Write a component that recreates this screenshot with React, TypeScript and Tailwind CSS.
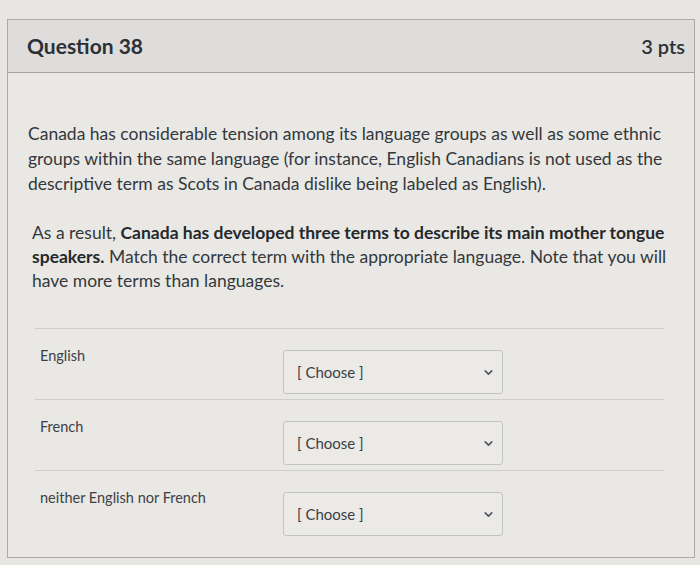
import React from 'react';

const rows = ['English', 'French', 'neither English nor French'];

const Chevron: React.FC = () => (
  <svg width="11" height="11" viewBox="0 0 10 10" fill="none" stroke="#4a5560" strokeWidth="1.4" strokeLinecap="round" strokeLinejoin="round">
    <path d="M2 3.5 L5 6.5 L8 3.5" />
  </svg>
);

const App: React.FC = () => {
  return (
    <div className="w-[700px] h-[565px] overflow-hidden bg-[#e7e6e3] pt-[19px] pl-[7px] font-['Lato','Liberation_Sans',sans-serif] text-[#33383c]">
      <div className="w-[688px] h-[539px] border border-[#a9a9a7] bg-[#e9e8e5] flex flex-col">
        <header className="h-[53px] shrink-0 bg-[#dedddb] border-b border-[#a3a3a1] flex items-center justify-between pl-[19px] pr-[9px]">
          <h2 className="text-[21px] font-bold text-[#2c3034]">Question 38</h2>
          <span className="text-[20px] font-semibold text-[#2c3034]">3 pts</span>
        </header>

        <div className="flex-1 pt-[48px] pl-[20px] pr-[16px]">
          <p className="text-[17.5px] leading-[25px]">
            Canada has considerable tension among its language groups as well as some ethnic groups within the same language (for instance, English Canadians is not used as the descriptive term as Scots in Canada dislike being labeled as English).
          </p>
          <p className="text-[17.5px] leading-[24px] mt-[25px] pl-[4px]">
            As a result, <strong className="font-bold text-[#25292c]">Canada has developed three terms to describe its main mother tongue</strong>{' '}
            <strong className="font-bold text-[#25292c]">speakers.</strong> Match the correct term with the appropriate language. Note that you will have more terms than languages.
          </p>

          <div className="mt-[35px] ml-[7px] mr-[14px]">
            {rows.map((label) => (
              <div key={label} className="border-t border-[#cfcecb] h-[71px] flex items-start pt-[16px]">
                <div className="w-[248px] shrink-0 text-[14.5px] pl-[5px] text-[#3c4145]">{label}</div>
                <div className="mt-[5px] w-[220px] h-[44px] border border-[#c2c4c4] rounded-[3px] bg-[#ebeae7] flex items-center justify-between pl-[13px] pr-[8px]">
                  <span className="text-[15px] text-[#3a3f43]">[ Choose ]</span>
                  <Chevron />
                </div>
              </div>
            ))}
          </div>
        </div>
      </div>
    </div>
  );
};

export default App;
